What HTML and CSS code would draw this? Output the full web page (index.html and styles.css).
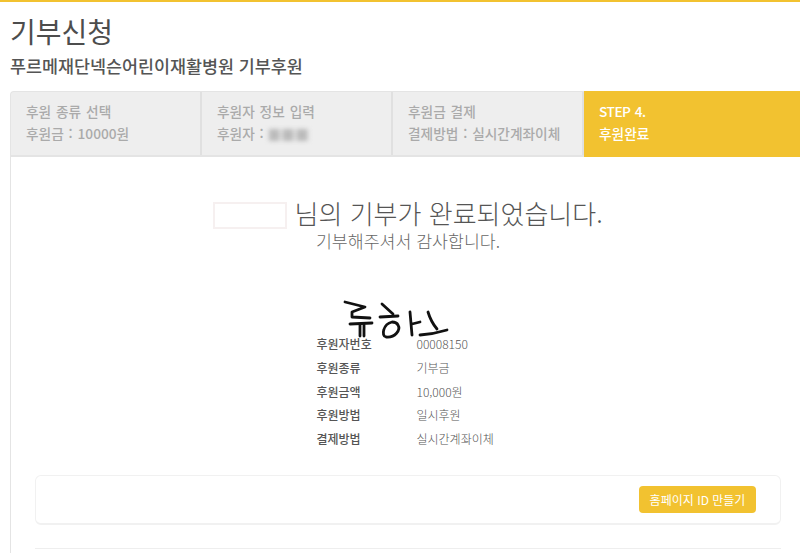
FILE: index.html
```html
<!DOCTYPE html>
<html lang="ko">
<head>
  <meta charset="UTF-8" />
  <meta name="viewport" content="width=device-width, initial-scale=1.0" />
  <title>기부신청</title>
  <link rel="stylesheet" href="styles.css">
</head>
<body>
  <header class="page-head">
    <h1>기부신청</h1>
    <h2>푸르메재단넥슨어린이재활병원 기부후원</h2>
  </header>
  <div class="wrap">
    <ol class="steps">
      <li class="step">
        <strong>후원 종류 선택</strong>
        <span>후원금 : 10000원</span>
      </li>
      <li class="step">
        <strong>후원자 정보 입력</strong>
        <span>후원자 : <i class="blur-name"></i></span>
      </li>
      <li class="step">
        <strong>후원금 결제</strong>
        <span>결제방법 : 실시간계좌이체</span>
      </li>
      <li class="step step-on">
        <strong>STEP 4.</strong>
        <span>후원완료</span>
      </li>
    </ol>
    <main class="panel">
      <p class="done"><span class="name-box"></span> 님의 기부가 완료되었습니다.</p>
      <p class="thanks">기부해주셔서 감사합니다.</p>
      <svg class="sign" width="110" height="42" viewBox="0 0 110 42" role="img" aria-label="서명">
        <g fill="none" stroke="#111" stroke-width="2.8" stroke-linecap="round" stroke-linejoin="round">
          <path d="M5 2 L25 7 L12 12 L12 17 L30 18" />
          <path d="M10 24 L32 23" />
          <path d="M20 25 L20 36 M24 25 L24 36" />
          <path d="M42 4 L53 14" />
          <path d="M40 17 L58 16" />
          <path d="M52 22 C43 24 41 36 46 37 C55 38 61 30 58 25 C57 23 54 22 52 22 Z" />
          <path d="M70 12 L72 35 M72 24 L80 22" />
          <path d="M88 12 Q91 22 97 29" />
          <path d="M80 35 Q94 34 107 30" />
        </g>
      </svg>
      <dl class="info">
        <dt>후원자번호</dt><dd>00008150</dd>
        <dt>후원종류</dt><dd>기부금</dd>
        <dt>후원금액</dt><dd>10,000원</dd>
        <dt>후원방법</dt><dd>일시후원</dd>
        <dt>결제방법</dt><dd>실시간계좌이체</dd>
      </dl>
      <div class="action-box">
        <a class="btn" href="#">홈페이지 ID 만들기</a>
      </div>
      <hr class="line" />
    </main>
  </div>
</body>
</html>
```

FILE: styles.css
```css
html, body {
  height: 100%;
}
body {
  margin: 0;
  display: flex;
  flex-direction: column;
  overflow: hidden;
  border-top: 2px solid #f2c230;
  box-sizing: border-box;
  background: #fff;
  color: #555;
  font-family: 'Noto Sans CJK KR', 'Noto Sans', sans-serif;
}
.page-head {
  padding: 0 10px;
}
h1 {
  margin: 11px 0 0;
  height: 37px;
  line-height: 37px;
  font-size: 28px;
  font-weight: 400;
  color: #4d4d4d;
}
h2 {
  margin: 4px 0 0;
  height: 24px;
  line-height: 24px;
  font-size: 17.4px;
  font-weight: 500;
  color: #555;
}
.wrap {
  flex: 1;
  display: flex;
  flex-direction: column;
  margin: 13px 0 0 10px;
  min-height: 0;
}
.steps {
  display: flex;
  margin: 0;
  padding: 0;
  height: 66px;
  list-style: none;
  box-sizing: border-box;
  background: #eee;
  border: 1px solid #e4e4e4;
  border-width: 1px 0 2px 1px;
  border-radius: 4px 0 0 0;
}
.step {
  width: 191px;
  box-sizing: border-box;
  padding: 8px 15px 0;
  border-right: 2px solid #e0e0e0;
  color: #aaa;
  font-size: 13.7px;
  word-spacing: 1px;
  line-height: 22px;
}
.step strong, .step span {
  display: block;
  font-weight: 500;
}
.step-on {
  flex: 1;
  margin: -1px 0 -2px;
  padding-top: 9px;
  border-right: 0;
  background: #f2c230;
  color: #fff;
}
.step-on strong {
  letter-spacing: -0.5px;
}
.blur-name {
  display: inline-block;
  width: 40px;
  height: 12px;
  vertical-align: -2px;
  background: repeating-linear-gradient(90deg, #bbb 0 10px, #ddd 10px 14px);
  filter: blur(2px);
}
.panel {
  flex: 1;
  display: flex;
  flex-direction: column;
  align-items: center;
  padding: 0 19px 0 24px;
  border-left: 1px solid #e4e4e4;
  min-height: 0;
}
.done {
  margin: 38px 0 0;
  height: 33px;
  line-height: 36px;
  font-size: 26px;
  font-weight: 300;
  color: #555;
  white-space: nowrap;
}
.name-box {
  display: inline-block;
  width: 70px;
  height: 23px;
  vertical-align: -5px;
  border: 2px solid #f6f0f0;
}
.thanks {
  margin: 0;
  height: 26px;
  line-height: 26px;
  font-size: 17.3px;
  font-weight: 300;
  color: #666;
}
.sign {
  display: block;
  margin: 46px 0 0 -26px;
}
.info {
  display: grid;
  grid-template-columns: 100px 80px;
  grid-auto-rows: 23.8px;
  margin: -10px 0 0 -3px;
  font-size: 12px;
  line-height: 24px;
}
.info dt {
  font-weight: 500;
  color: #555;
}
.info dd {
  margin: 0;
  font-weight: 300;
  color: #555;
  white-space: nowrap;
}
.action-box {
  display: flex;
  justify-content: flex-end;
  align-items: center;
  align-self: stretch;
  height: 50px;
  margin-top: 24px;
  padding-right: 24px;
  box-sizing: border-box;
  border: 1px solid #f1f1f1;
  border-bottom-width: 2px;
  border-radius: 6px;
}
.btn {
  display: block;
  width: 117px;
  height: 27px;
  line-height: 27px;
  text-align: center;
  border-radius: 4px;
  background: #f2c230;
  color: #fff;
  font-size: 12px;
  text-decoration: none;
}
.line {
  align-self: stretch;
  margin: 23px 0 0;
  border: 0;
  border-top: 1px solid #eee;
}
```
